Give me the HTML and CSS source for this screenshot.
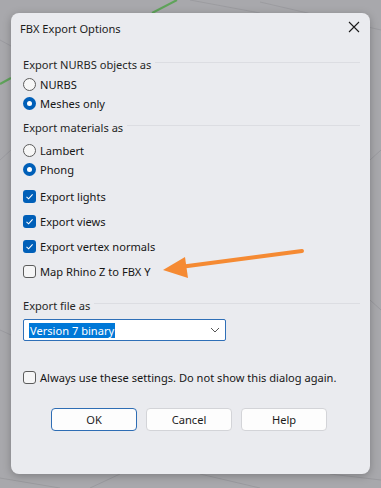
FILE: index.html
```html
<!DOCTYPE html>
<html lang="en">
<head>
    <meta charset="UTF-8">
    <title>FBX Export Options</title>
    <link rel="stylesheet" href="styles.css">
</head>
<body>

<div class="viewport">
    <svg class="grid" width="381" height="488" viewBox="0 0 381 488">
        <path d="M152 13 L177 0" stroke="#5fa35a" stroke-width="2" fill="none"/>
        <path d="M0 84 L11 78" stroke="#5fa35a" stroke-width="2" fill="none"/>
        <path d="M190 0 L260 13 M260 2 L381 30 M0 40 L11 46 M0 160 L11 150 M0 330 L11 335" stroke="#9c9ca0" stroke-width="1" fill="none"/>
        <path d="M0 478 L60 488 M120 474 L90 488 M200 474 L260 488 M330 474 L381 480 M370 160 L381 150 M370 300 L381 310" stroke="#9a9a9e" stroke-width="1" fill="none"/>
    </svg>

    <div class="dialog">
        <div class="titlebar">
            <span class="title">FBX Export Options</span>
            <svg class="close" width="12" height="12" viewBox="0 0 12 12">
                <path d="M1 1 L11 11 M11 1 L1 11" stroke="#1a1a1a" stroke-width="1.1" fill="none"/>
            </svg>
        </div>

        <div class="body">
            <div class="group-label first">Export NURBS objects as</div>
            <div class="option radio-row"><span class="radio"></span>NURBS</div>
            <div class="option radio-row"><span class="radio checked"></span>Meshes only</div>

            <div class="group-label second">Export materials as</div>
            <div class="option radio-row"><span class="radio"></span>Lambert</div>
            <div class="option radio-row"><span class="radio checked"></span>Phong</div>

            <div class="checks">
                <div class="option check-row"><span class="check checked"><svg width="9" height="9" viewBox="0 0 9 9"><path d="M1.5 4.8 L3.6 6.8 L7.6 2.4" stroke="#fff" stroke-width="1.1" fill="none"/></svg></span>Export lights</div>
                <div class="option check-row"><span class="check checked"><svg width="9" height="9" viewBox="0 0 9 9"><path d="M1.5 4.8 L3.6 6.8 L7.6 2.4" stroke="#fff" stroke-width="1.1" fill="none"/></svg></span>Export views</div>
                <div class="option check-row"><span class="check checked"><svg width="9" height="9" viewBox="0 0 9 9"><path d="M1.5 4.8 L3.6 6.8 L7.6 2.4" stroke="#fff" stroke-width="1.1" fill="none"/></svg></span>Export vertex normals</div>
                <div class="option check-row"><span class="check"></span>Map Rhino Z to FBX Y</div>
            </div>

            <div class="group-label third">Export file as</div>
            <div class="select">
                <span class="selected-text">Version 7 binary</span>
                <svg class="chevron" width="10" height="6" viewBox="0 0 10 6">
                    <path d="M1 1 L5 5 L9 1" stroke="#555" stroke-width="1" fill="none"/>
                </svg>
            </div>

            <div class="option check-row always"><span class="check"></span>Always use these settings. Do not show this dialog again.</div>

            <div class="buttons">
                <button class="btn default">OK</button>
                <button class="btn">Cancel</button>
                <button class="btn">Help</button>
            </div>
        </div>
    </div>

    <!-- annotation arrow drawn over the dialog -->
    <svg class="arrow" width="381" height="488" viewBox="0 0 381 488">
        <path d="M302 251 L180 267" stroke="#f58a33" stroke-width="4" stroke-linecap="round" fill="none"/>
        <path d="M163 270 L185 257 L188 278 Z" fill="#f58a33"/>
    </svg>
</div>

</body>
</html>
```

FILE: styles.css
```css
body {
    margin: 0;
    font-family: 'Noto Sans', 'Open Sans', sans-serif;
    font-size: 11.1px;
    color: #161616;
}
.viewport {
    position: relative;
    width: 381px;
    height: 488px;
    overflow: hidden;
    background-color: #a8a8ac;
    padding-top: 13px;
    box-sizing: border-box;
}
.grid {
    position: absolute;
    left: 0;
    top: 0;
}
.dialog {
    position: relative;
    margin-left: 11px;
    width: 359px;
    height: 461px;
    background-color: #eaebef;
    border-radius: 8px;
    box-shadow: 0 2px 8px rgba(0, 0, 0, 0.25);
}
.titlebar {
    height: 30px;
    display: flex;
    align-items: center;
    justify-content: space-between;
    padding: 0 10px 0 9px;
}
.title {
    color: #1a1a1a;
    margin-top: 1px;
}
.close {
    margin-top: -2px;
}
.body {
    padding: 0 10px 0 12px;
    white-space: nowrap;
}
.group-label {
    height: 18px;
    display: flex;
    align-items: center;
    color: #262626;
}
.group-label::after {
    content: '';
    flex: 1;
    height: 1px;
    background-color: #dcdde2;
    margin-left: 4px;
    margin-top: -3px;
}
.group-label.first {
    margin-top: 12px;
}
.group-label.second {
    margin-top: 5px;
}
.group-label.third {
    margin-top: 12px;
}
.option {
    display: flex;
    align-items: center;
}
.radio-row {
    height: 19px;
}
.group-label + .radio-row {
    margin-top: 2px;
}
.group-label.second + .radio-row {
    margin-top: 5px;
}
.radio {
    width: 11px;
    height: 11px;
    border: 1px solid #5c5c5c;
    border-radius: 50%;
    background-color: #f7f7f7;
    margin-right: 4px;
    position: relative;
}
.radio.checked {
    width: 13px;
    height: 13px;
    border: none;
    background-color: #005fb8;
}
.radio.checked::after {
    content: '';
    position: absolute;
    left: 4px;
    top: 4px;
    width: 5px;
    height: 5px;
    border-radius: 50%;
    background-color: #fff;
}
.checks {
    margin-top: 5px;
}
.check-row {
    height: 25px;
}
.check {
    width: 11px;
    height: 11px;
    border: 1px solid #5c5c5c;
    border-radius: 3px;
    background-color: #f5f5f6;
    margin-right: 4px;
    display: flex;
    align-items: center;
    justify-content: center;
}
.check.checked {
    width: 13px;
    height: 13px;
    border: none;
    background-color: #005fb8;
}
.select {
    box-sizing: border-box;
    margin-top: 5px;
    width: 203px;
    height: 22px;
    border: 1px solid #2f6fb7;
    border-radius: 2px;
    background-color: #fff;
    display: flex;
    align-items: center;
    justify-content: space-between;
    padding: 0 5px 0 5px;
}
.selected-text {
    background-color: #0078d7;
    color: #fff;
    padding: 0 1px;
    line-height: 15px;
}
.always {
    height: 19px;
    margin-top: 27px;
}
.buttons {
    margin-top: 21px;
    display: flex;
    justify-content: center;
    gap: 9px;
    padding-right: 5px;
}
.btn {
    width: 86px;
    height: 23px;
    font-family: inherit;
    font-size: 11.1px;
    color: #1b1b1b;
    background-color: #fdfdfd;
    border: 1px solid #d3d4d8;
    border-radius: 4px;
    padding: 0;
}
.btn.default {
    border-color: #2e6db4;
}
.arrow {
    position: absolute;
    left: 0;
    top: 0;
}
```
